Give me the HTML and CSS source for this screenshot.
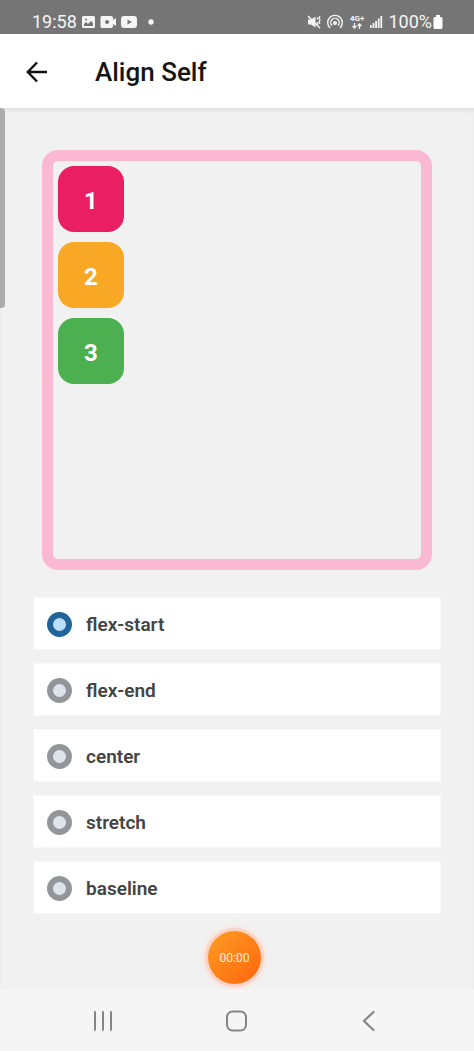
FILE: index.html
```html
<!DOCTYPE html>
<html lang="en">
<head>
<meta charset="utf-8">
<meta name="viewport" content="width=device-width, initial-scale=1">
<title>Align Self</title>
<link rel="stylesheet" href="styles.css">
</head>
<body>
<div class="status">
  <span class="clock">19:58</span>
  <svg class="notices" width="74" height="14" viewBox="0 0 74 14" fill="#f5f5f5" aria-hidden="true">
    <path fill-rule="evenodd" d="M1.500 1h10Q13 1 13 2.500v9q0 1.500-1.500 1.500h-10Q0 13 0 11.500v-9Q0 1 1.500 1zM2 11h9V8L9 6 6 9 4 7 2 9zM4 3.500a1 1 0 1 0 .1 0z"/>
    <path fill-rule="evenodd" d="M20 1h9q2 0 2 2v2l3-2v8l-3-2v2q0 2-2 2h-9q-1.500 0-1.500-1.500v-9Q18.500 1 20 1zM25 5a2 2 0 1 0 .1 0z"/>
    <path fill-rule="evenodd" d="M42 1h10q3 0 3 3v6q0 3-3 3H42q-3 0-3-3V4q0-3 3-3zM45.500 4.500v5L50 7z"/>
    <circle cx="69" cy="7" r="2.700"/>
  </svg>
  <svg class="signals" width="76" height="18" viewBox="0 0 76 18" fill="#f5f5f5" aria-hidden="true">
    <path d="M1 6.500h3l4.500-3v11L4 11.500H1z"/>
    <path d="M1 3l12 12" stroke="#f5f5f5" stroke-width="1.500"/>
    <path d="M10.500 4.500v2M10.500 9v3M13 3l-1 2 1 2-1 2 1 2" stroke="#f5f5f5" stroke-width="1.300" fill="none"/>
    <g fill="none" stroke="#f5f5f5" stroke-width="1.400">
      <path d="M23 15a7.300 7.300 0 1 1 10 0"/>
      <path d="M25 12.500a4.200 4.200 0 1 1 6 0"/>
    </g>
    <circle cx="28" cy="10" r="2"/>
    <text class="network" x="43" y="8">4G+</text>
    <path d="M47.500 10v5m-2-2 2 2 2-2M52.500 16v-5m-2 2 2-2 2 2" fill="none" stroke="#f5f5f5" stroke-width="1.300"/>
    <path d="M63 12h1.800v3H63zM65.600 10h1.800v5h-1.800zM68.200 8H70v7h-1.800zM70.800 5.500h1.800V15h-1.800zM73.400 3h1.800v12h-1.800z"/>
  </svg>
  <span class="percent">100%</span>
  <svg width="10" height="14" viewBox="0 0 10 14" fill="#fff" aria-hidden="true"><path d="M3 0h4v2h1q1.500 0 1.500 1.500v9Q9.500 14 8 14H2Q.5 14 .5 12.500v-9Q.5 2 2 2h1z"/></svg>
</div>
<header class="header">
  <button class="back" type="button" aria-label="Back">
    <svg width="22" height="22" viewBox="0 0 22 22" fill="none" stroke="#111" stroke-width="2.400"><path d="M21 11H2M11 1.500 1.800 11 11 20.500"/></svg>
  </button>
  <h1 class="title">Align Self</h1>
</header>
<main class="content">
  <div class="scroll-thumb"></div>
  <div class="frame">
    <div class="box pink">1</div>
    <div class="box orange">2</div>
    <div class="box green">3</div>
  </div>
  <form class="options">
    <label class="option"><input class="radio" type="radio" name="align" checked>flex-start</label>
    <label class="option"><input class="radio" type="radio" name="align">flex-end</label>
    <label class="option"><input class="radio" type="radio" name="align">center</label>
    <label class="option"><input class="radio" type="radio" name="align">stretch</label>
    <label class="option"><input class="radio" type="radio" name="align">baseline</label>
  </form>
  <button class="recorder" type="button">00:00</button>
</main>
<nav class="nav">
  <button class="key" type="button" aria-label="Recent apps"><svg width="22" height="22" viewBox="0 0 22 22" fill="none" stroke="#858585" stroke-width="2" stroke-linecap="round"><path d="M2 2v18M10 2v18M18 2v18"/></svg></button>
  <button class="key" type="button" aria-label="Home"><svg width="22" height="22" viewBox="0 0 22 22" fill="none" stroke="#858585" stroke-width="2"><rect x="1" y="1.500" width="19" height="19" rx="5.500"/></svg></button>
  <button class="key" type="button" aria-label="Back"><svg width="22" height="22" viewBox="0 0 22 22" fill="none" stroke="#858585" stroke-width="2.200" stroke-linecap="round"><path d="M14.500 2 5 11l9.500 9"/></svg></button>
</nav>
</body>
</html>
```

FILE: styles.css
```css
* {
  box-sizing: border-box;
}

body {
  margin: 0;
  min-height: 100vh;
  display: flex;
  flex-direction: column;
  background: #fff;
  font-family: Roboto, "Liberation Sans", sans-serif;
}

button {
  border: 0;
  padding: 0;
  background: none;
  font-family: inherit;
}

svg {
  display: block;
}

.status {
  display: flex;
  align-items: center;
  height: 34px;
  padding: 9px 31px 0 32px;
  background: #757575;
  color: #f5f5f5;
  font-size: 18px;
  line-height: 25px;
}

.notices {
  margin-left: 5px;
}

.signals {
  margin-left: auto;
}

.network {
  font-size: 8px;
  font-weight: 700;
}

.percent {
  margin: 0 1px 0 5px;
}

.header {
  display: flex;
  align-items: center;
  gap: 47px;
  height: 74px;
  padding: 2px 26px 0;
  background: #fff;
}

.title {
  margin: 0;
  color: #151515;
  font-size: 26px;
  font-weight: 500;
  line-height: 32px;
}

.content {
  position: relative;
  flex: 1;
  padding: 42px 33px 28px;
  background: #f1f1f1;
  box-shadow: inset 0 4px 4px -2px #dedede;
}

.scroll-thumb {
  position: absolute;
  top: 0;
  left: 0;
  width: 5px;
  height: 200px;
  border-radius: 0 4px 4px 0;
  background: #ababab;
}

.frame {
  display: flex;
  flex-direction: column;
  align-items: flex-start;
  gap: 10px;
  height: 420px;
  margin: 0 9px 27px;
  padding: 5px;
  border: 11px solid #fbb9d1;
  border-radius: 16px;
}

.box {
  display: grid;
  place-items: center;
  width: 66px;
  height: 66px;
  padding-top: 3px;
  border-radius: 16px;
  color: #fff;
  font-size: 24px;
  font-weight: 700;
}

.pink {
  background: #e91e63;
}

.orange {
  background: #f9a825;
}

.green {
  background: #4caf50;
}

.options {
  display: flex;
  flex-direction: column;
  gap: 13px;
}

.option {
  display: flex;
  align-items: center;
  gap: 14px;
  height: 53px;
  padding: 1px 13px 0;
  background: #fff;
  border: 1px solid #f8f8f8;
  color: #444;
  font-size: 19px;
  font-weight: 600;
}

.radio {
  appearance: none;
  width: 25px;
  height: 25px;
  margin: 0;
  border: 6px solid #939699;
  border-radius: 50%;
  background: #dde4ec;
}

.radio:checked {
  border-color: #216498;
  background: #bbdefb;
}

.recorder {
  position: absolute;
  bottom: 6px;
  left: calc(50% - 29px);
  width: 53px;
  height: 53px;
  border-radius: 50%;
  background: linear-gradient(135deg, #ff9d24, #ff650c);
  box-shadow: 0 0 0 3px #fbd3c5, 0 0 3px 5px #fbe3dc;
  color: #fff0dc;
  font-size: 12px;
}

.nav {
  display: flex;
  align-items: center;
  justify-content: center;
  gap: 111px;
  height: 63px;
  background: #f5f5f5;
  border-bottom: 2px solid #fff;
}
```
